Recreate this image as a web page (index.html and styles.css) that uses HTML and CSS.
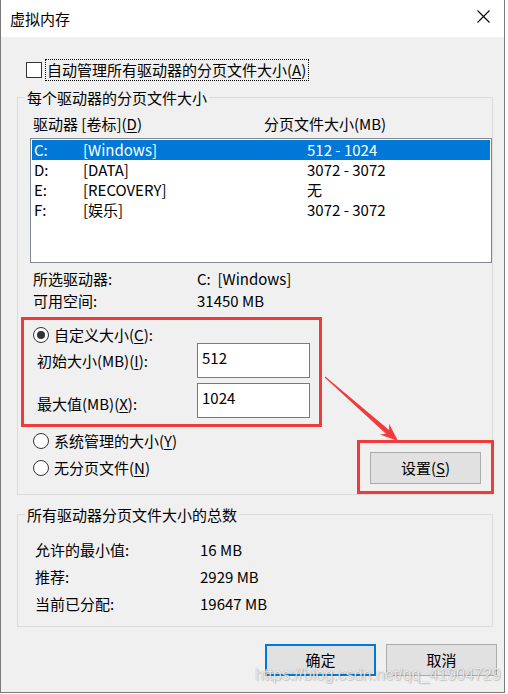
FILE: index.html
```html
<!DOCTYPE html>
<html lang="zh-CN">
<head>
<meta charset="utf-8">
<title>虚拟内存</title>
<link rel="stylesheet" href="styles.css">
</head>
<body>
<div class="window">
  <div class="titlebar">
    <span class="title">虚拟内存</span>
    <svg class="close" width="13" height="13" viewBox="0 0 13 13"><path d="M0.5 0.5 L12.5 12.5 M12.5 0.5 L0.5 12.5" stroke="#000" stroke-width="1.1" fill="none"/></svg>
  </div>
  <div class="client">
    <div class="auto-row">
      <span class="checkbox"></span>
      <span class="focus">自动管理所有驱动器的分页文件大小(<u>A</u>)</span>
    </div>

    <fieldset class="group group-drives">
      <legend>每个驱动器的分页文件大小</legend>
      <div class="list-head"><span class="col-drive">驱动器 [卷标](<u>D</u>)</span><span>分页文件大小(MB)</span></div>
      <div class="listbox">
        <div class="row selected"><span class="c1">C:</span><span class="c2">[Windows]</span><span>512 - 1024</span></div>
        <div class="row"><span class="c1">D:</span><span class="c2">[DATA]</span><span>3072 - 3072</span></div>
        <div class="row"><span class="c1">E:</span><span class="c2">[RECOVERY]</span><span>无</span></div>
        <div class="row"><span class="c1">F:</span><span class="c2">[娱乐]</span><span>3072 - 3072</span></div>
      </div>
      <div class="info"><span class="info-label">所选驱动器:</span><span class="pre">C:  [Windows]</span></div>
      <div class="info"><span class="info-label">可用空间:</span><span>31450 MB</span></div>

      <div class="mark custom">
        <div class="radio-row"><span class="radio checked"></span><span>自定义大小(<u>C</u>):</span></div>
        <div class="edit-row"><span class="edit-label">初始大小(MB)(<u>I</u>):</span><div class="edit">512</div></div>
        <div class="edit-row gap"><span class="edit-label low">最大值(MB)(<u>X</u>):</span><div class="edit">1024</div></div>
      </div>

      <div class="bottom">
        <div class="radios">
          <div class="radio-line first"><span class="radio"></span><span>系统管理的大小(<u>Y</u>)</span></div>
          <div class="radio-line"><span class="radio"></span><span>无分页文件(<u>N</u>)</span></div>
        </div>
        <div class="mark set-mark"><button class="btn">设置(<u>S</u>)</button></div>
      </div>
    </fieldset>

    <fieldset class="group group-total">
      <legend>所有驱动器分页文件大小的总数</legend>
      <div class="total-row"><span class="total-label">允许的最小值:</span><span>16 MB</span></div>
      <div class="total-row"><span class="total-label">推荐:</span><span>2929 MB</span></div>
      <div class="total-row"><span class="total-label">当前已分配:</span><span>19647 MB</span></div>
    </fieldset>

    <div class="actions">
      <button class="btn default">确定</button>
      <button class="btn">取消</button>
    </div>
  </div>

  <svg class="arrow" width="508" height="694" viewBox="0 0 508 694">
    <polygon points="324.7,377.4 385.9,433.7 379.9,434.4 398,441 389.1,423.8 389.1,429.9 325.3,376.6" fill="#ef3b3b"/>
  </svg>
  <div class="watermark">https://blog.csdn.net/qq_41904729</div>
</div>
</body>
</html>
```

FILE: styles.css
```css
* { box-sizing: border-box; }

html, body {
  margin: 0;
  padding: 0;
  background: #ffffff;
}

body {
  font-family: "Noto Sans CJK SC", "Noto Sans", sans-serif;
  font-size: 15px;
  color: #000;
}

u { text-decoration: underline; text-underline-offset: 2px; }

.window {
  position: relative;
  width: 505px;
  height: 693px;
  border-left: 1px solid #7a7a7a;
  border-right: 1px solid #7a7a7a;
  border-bottom: 1px solid #7a7a7a;
  display: flex;
  flex-direction: column;
  background: #f0f0f0;
}

.titlebar {
  height: 37px;
  flex: none;
  background: #ffffff;
  display: flex;
  align-items: center;
  justify-content: space-between;
  padding: 0 14px 0 9px;
}

.title { line-height: 20px; }

.close { display: block; margin-top: -4px; }

.client {
  flex: 1;
  background: #f0f0f0;
}

.auto-row {
  margin-top: 22px;
  height: 22px;
  padding-left: 25px;
  display: flex;
  align-items: center;
}

.checkbox {
  width: 16px;
  height: 16px;
  border: 1px solid #333;
  background: #fff;
  margin-right: 3px;
  flex: none;
}

.focus {
  height: 22px;
  line-height: 20px;
  border: 1px dotted #000;
  padding: 0 2px 0 1px;
}

.group {
  margin: 0 0 0 16px;
  width: 476px;
  border: 1px solid #dcdcdc;
  padding: 0;
  min-width: 0;
}

.group legend {
  margin-left: 7px;
  padding: 0 2px;
  line-height: 21px;
}

.group-drives { margin-top: 6px; }

.list-head {
  margin-top: 6px;
  height: 20px;
  line-height: 20px;
  padding-left: 15px;
  display: flex;
}

.col-drive { width: 231px; }

.listbox {
  margin: 4px 0 0 12px;
  width: 462px;
  height: 125px;
  border: 1px solid #828790;
  background: #fff;
  padding: 1px;
}

.row {
  height: 20px;
  line-height: 20px;
  display: flex;
  padding-left: 2px;
}

.row.selected {
  background: #0078d7;
  color: #fff;
}

.c1 { width: 49px; }
.c2 { width: 224px; }

.info {
  height: 22px;
  line-height: 22px;
  padding-left: 15px;
  display: flex;
}

.info:first-of-type { margin-top: 5px; }

.listbox + .info { margin-top: 5px; }

.info-label { width: 164px; }

.pre { white-space: pre; }

.mark {
  border: 3px solid #ef3b3b;
}

.custom {
  margin: 5px 0 0 3px;
  width: 301px;
  height: 110px;
  padding-bottom: 6px;
}

.radio-row {
  padding: 7px 0 0 9px;
  height: 23px;
  display: flex;
  align-items: center;
  line-height: 16px;
}

.radio {
  width: 16px;
  height: 16px;
  border: 1px solid #333;
  border-radius: 50%;
  background: #fff;
  margin-right: 5px;
  flex: none;
  display: flex;
  align-items: center;
  justify-content: center;
}

.radio.checked::after {
  content: "";
  width: 8px;
  height: 8px;
  border-radius: 50%;
  background: #333;
}

.edit-row {
  height: 35px;
  display: flex;
  align-items: center;
  padding-left: 13px;
}

.edit-row.gap { margin-top: 5px; }

.edit-label { width: 160px; line-height: 20px; }

.edit-label.low { margin-top: 6px; }

.edit {
  width: 113px;
  height: 35px;
  border: 1px solid #7a7a7a;
  background: #fff;
  padding-left: 4px;
  line-height: 28px;
  align-self: flex-start;
}

.bottom {
  height: 67px;
  display: flex;
  justify-content: space-between;
  align-items: flex-end;
}

.radios {
  align-self: flex-start;
  padding-left: 15px;
}

.radio-line {
  height: 28px;
  display: flex;
  align-items: center;
  line-height: 16px;
}

.radio-line.first { height: 27px; }

.set-mark {
  width: 137px;
  height: 54px;
  margin-right: -2px;
  padding: 9px 0 0 10px;
}

.btn {
  width: 111px;
  height: 32px;
  background: #e1e1e1;
  border: 1px solid #adadad;
  font-family: "Noto Sans CJK SC", "Noto Sans", sans-serif;
  font-size: 15px;
  color: #000;
  padding: 0;
  display: block;
  line-height: 20px;
}

.btn.default { border: 2px solid #0078d7; }

.group-total {
  margin-top: 9px;
  padding: 11px 0 9px 0;
}

.total-row {
  height: 27px;
  line-height: 27px;
  display: flex;
  padding-left: 17px;
}

.total-label { width: 165px; }

.actions {
  margin-top: 17px;
  display: flex;
  justify-content: flex-end;
  gap: 10px;
  padding-right: 7px;
}

.arrow {
  position: absolute;
  left: -1px;
  top: 0;
  pointer-events: none;
}

.watermark {
  position: absolute;
  left: 254px;
  top: 665px;
  font-family: "Liberation Sans", sans-serif;
  font-size: 16px;
  line-height: 20px;
  color: rgba(255, 255, 255, 0.8);
  text-shadow: 0 0 1px rgba(0, 0, 0, 0.35), 1px 1px 1px rgba(0, 0, 0, 0.15);
  pointer-events: none;
  white-space: nowrap;
}
```
